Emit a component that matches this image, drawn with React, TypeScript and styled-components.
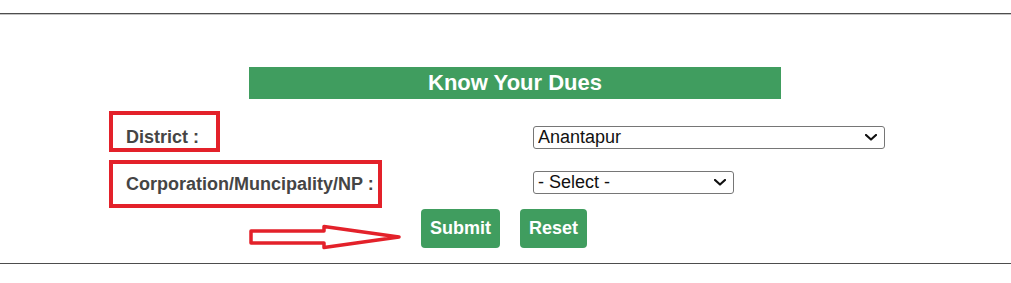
import React from "react";
import styled, { createGlobalStyle } from "styled-components";

const Global = createGlobalStyle`
  html, body { margin: 0; padding: 0; background: #fff; }
  body { font-family: "Liberation Sans", Arial, sans-serif; }
`;

const Page = styled.div`
  width: 1011px;
  padding-top: 13px;
`;

const Rule = styled.div`
  height: 1px;
  background: #4d4d4d;
  box-shadow: 0 0.5px 0 #8a8a8a;
`;

const Content = styled.div`
  padding: 53px 0 13px;
`;

const Header = styled.div`
  margin-left: 249px;
  width: 532px;
  height: 32px;
  background: #409d5f;
  color: #fff;
  font-weight: bold;
  font-size: 22px;
  line-height: 32px;
  text-align: center;
`;

const FieldRow = styled.div<{ $gap: number }>`
  display: grid;
  grid-template-columns: 424px auto;
  align-items: start;
  padding-left: 109px;
  margin-top: ${(p) => p.$gap}px;
`;

const LabelBox = styled.div<{ $w: number; $h: number; $pt: number }>`
  box-sizing: border-box;
  width: ${(p) => p.$w}px;
  height: ${(p) => p.$h}px;
  border: 4px solid #e3212a;
  padding: ${(p) => p.$pt}px 0 0 13px;
  color: #454545;
  font-weight: bold;
  font-size: 18px;
  line-height: 20px;
  white-space: nowrap;
`;

const SelectWrap = styled.div<{ $w: number; $top: number }>`
  position: relative;
  width: ${(p) => p.$w}px;
  margin-top: ${(p) => p.$top}px;
`;

const Select = styled.select`
  appearance: none;
  box-sizing: border-box;
  width: 100%;
  height: 23px;
  border: 1px solid #767676;
  border-radius: 3px;
  background: #fff;
  color: #111;
  font-family: "Liberation Sans", Arial, sans-serif;
  font-size: 18px;
  line-height: 21px;
  padding: 0 0 0 4px;
  outline: none;
`;

const Chevron = styled.svg`
  position: absolute;
  right: 8px;
  top: 8px;
  pointer-events: none;
`;

const ButtonRow = styled.div`
  display: flex;
  align-items: flex-start;
  padding-left: 248px;
  margin-top: 1px;
`;

const Arrow = styled.svg`
  margin-top: 15px;
  margin-right: 19px;
  flex: none;
`;

const Button = styled.button<{ $w: number; $gap?: number }>`
  width: ${(p) => p.$w}px;
  height: 39px;
  margin-left: ${(p) => p.$gap ?? 0}px;
  border: none;
  border-radius: 4px;
  background: #409d5f;
  color: #fff;
  font-family: "Liberation Sans", Arial, sans-serif;
  font-weight: bold;
  font-size: 18px;
  padding: 0;
  cursor: pointer;
`;

const ChevronIcon = () => (
  <Chevron width="12" height="7" viewBox="0 0 12 7">
    <path d="M1 1 L6 5.5 L11 1" fill="none" stroke="#111" strokeWidth="2.2" strokeLinecap="round" strokeLinejoin="round" />
  </Chevron>
);

export default function App() {
  return (
    <>
      <Global />
      <Page>
        <Rule />
        <Content>
          <Header>Know Your Dues</Header>
          <FieldRow $gap={12}>
            <LabelBox $w={111} $h={41} $pt={12}>District :</LabelBox>
            <SelectWrap $w={352} $top={15}>
              <Select defaultValue="Anantapur">
                <option>Anantapur</option>
              </Select>
              <ChevronIcon />
            </SelectWrap>
          </FieldRow>
          <FieldRow $gap={8}>
            <LabelBox $w={273} $h={48} $pt={10}>Corporation/Muncipality/NP :</LabelBox>
            <SelectWrap $w={201} $top={11}>
              <Select defaultValue="- Select -">
                <option>- Select -</option>
              </Select>
              <ChevronIcon />
            </SelectWrap>
          </FieldRow>
          <ButtonRow>
            <Arrow width="154" height="26" viewBox="0 0 154 26">
              <polygon
                points="3,7 76,7 76,2.5 151,13 76,23.5 76,19 3,19"
                fill="#fff"
                stroke="#e3212a"
                strokeWidth="3.5"
                strokeLinejoin="round"
              />
            </Arrow>
            <Button $w={79}>Submit</Button>
            <Button $w={67} $gap={20}>Reset</Button>
          </ButtonRow>
        </Content>
        <Rule />
      </Page>
    </>
  );
}
